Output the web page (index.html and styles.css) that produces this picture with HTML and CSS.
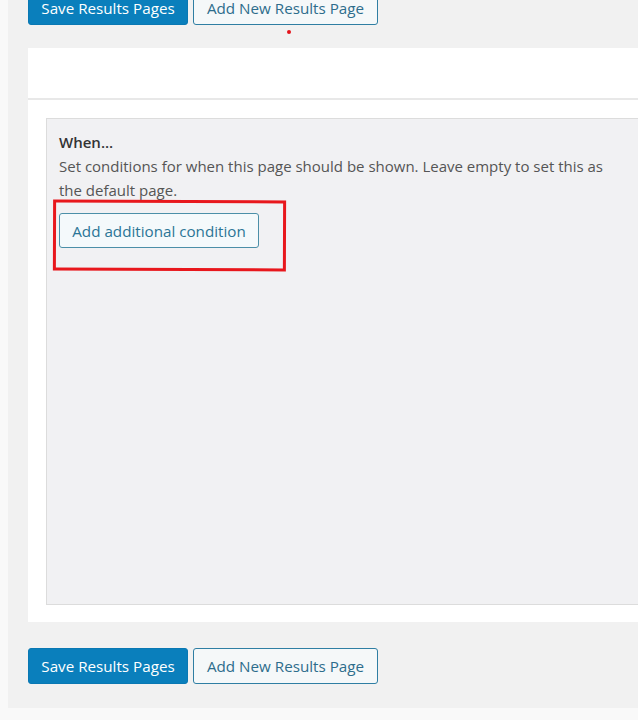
FILE: index.html
```html
<!DOCTYPE html>
<html>
<head>
<meta charset="utf-8">
<link rel="stylesheet" href="styles.css">
</head>
<body>
<div class="wrap">
  <div class="actions top">
    <button class="btn primary">Save Results Pages</button>
    <button class="btn secondary">Add New Results Page</button>
    <span class="dot"></span>
  </div>
  <div class="card">
    <div class="card-head"></div>
    <div class="card-body">
      <div class="cond">
        <div class="cond-title">When...</div>
        <div class="cond-desc">Set conditions for when this page should be shown. Leave empty to set this as the default page.</div>
        <button class="btn secondary small">Add additional condition</button>
        <span class="highlight"></span>
      </div>
    </div>
  </div>
  <div class="actions bottom">
    <button class="btn primary">Save Results Pages</button>
    <button class="btn secondary">Add New Results Page</button>
  </div>
</div>
</body>
</html>
```
FILE: styles.css
```css
html, body {
  margin: 0;
  padding: 0;
  overflow: hidden;
}
body {
  background: #f9f9f9;
  font-family: "Open Sans", "Noto Sans", sans-serif;
  color: #444;
  height: 720px;
}
.wrap {
  display: flow-root;
  margin-left: 8px;
  background: #f1f1f1;
  padding: 0 0 24px 20px;
  box-sizing: border-box;
  height: 708px;
}
.actions {
  display: flex;
  gap: 5px;
  position: relative;
}
.actions.top {
  margin-top: -10px;
}
.actions.top .btn {
  height: 35px;
}
.actions.bottom {
  margin-top: 26px;
}
.btn {
  font-family: "Open Sans", "Noto Sans", sans-serif;
  font-size: 15.2px;
  height: 36px;
  padding: 0 8px;
  border-radius: 3px;
  box-sizing: border-box;
  line-height: 34px;
  cursor: pointer;
  white-space: nowrap;
}
.btn.primary {
  width: 160px;
  background: #0a7fbc;
  border: 1px solid #0a78b3;
  color: #fff;
}
.btn.secondary {
  width: 185px;
  background: #f5f8f9;
  border: 1px solid #2f7ea3;
  color: #2d6d8c;
}
.btn.small {
  width: 200px;
  height: 35px;
  color: #2b7596;
  border-color: #4b8fa8;
  background: #f4f9fb;
}
.dot {
  position: absolute;
  left: 259px;
  top: 40px;
  width: 4px;
  height: 4px;
  border-radius: 50%;
  background: #e4131b;
}
.card {
  margin-top: 23px;
  width: 640px;
  background: #fff;
}
.card-head {
  height: 50px;
  border-bottom: 2px solid #e8e8e8;
}
.card-body {
  padding: 18px 0 17px 18px;
}
.cond {
  position: relative;
  height: 487px;
  box-sizing: border-box;
  background: #f1f1f3;
  border: 1px solid #dcdcdc;
  padding: 11px 12px;
  font-size: 15px;
  line-height: 24px;
}
.cond-title {
  font-weight: 600;
  color: #333;
}
.cond-desc {
  color: #555;
  margin-bottom: 11px;
  width: 560px;
}
.highlight {
  position: absolute;
  left: 6px;
  top: 81px;
  width: 227px;
  height: 65px;
  border: 3px solid #e8171c;
  transform: rotate(0.2deg);
}
```
